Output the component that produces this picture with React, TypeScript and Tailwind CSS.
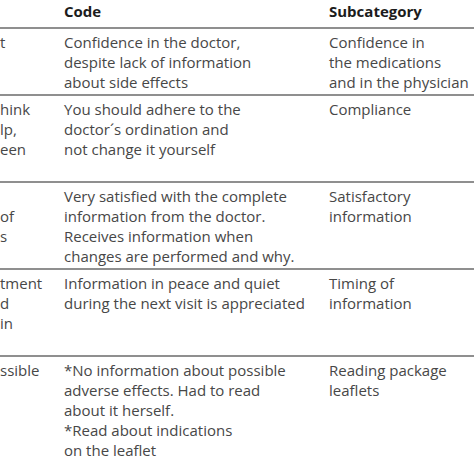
type Row = {
  theme: string[]
  code: string[]
  sub: string[]
}

const rows: Row[] = [
  {
    theme: ["t", "", ""],
    code: ["Confidence in the doctor,", "despite lack of information", "about side effects"],
    sub: ["Confidence in", "the medications", "and in the physician"],
  },
  {
    theme: ["hink", "lp,", "een", ""],
    code: ["You should adhere to the", "doctor´s ordination and", "not change it yourself"],
    sub: ["Compliance"],
  },
  {
    theme: ["", "of", "s", ""],
    code: [
      "Very satisfied with the complete",
      "information from the doctor.",
      "Receives information when",
      "changes are performed and why.",
    ],
    sub: ["Satisfactory", "information"],
  },
  {
    theme: ["tment", "d", "in", ""],
    code: ["Information in peace and quiet", "during the next visit is appreciated"],
    sub: ["Timing of", "information"],
  },
  {
    theme: ["ssible", "", "", "", ""],
    code: [
      "*No information about possible",
      "adverse effects. Had to read",
      "about it herself.",
      "*Read about indications",
      "on the leaflet",
    ],
    sub: ["Reading package", "leaflets"],
  },
]

function Lines({ items }: { items: string[] }) {
  return (
    <div className="flex flex-col">
      {items.map((line, i) => (
        <div key={i} className="whitespace-nowrap h-[20px]">
          {line || "\u00a0"}
        </div>
      ))}
    </div>
  )
}

export default function App() {
  return (
    <div
      className="w-[474px] h-[474px] overflow-hidden bg-white text-[15px] leading-[20px] text-[#474747]"
      style={{ fontFamily: '"Open Sans", "Noto Sans", sans-serif' }}
    >
      <div className="grid grid-cols-[64px_265px_1fr] h-[27px] content-end items-end pb-[6px] font-bold text-[#1c1c1c]">
        <div />
        <div>Code</div>
        <div>Subcategory</div>
      </div>
      {rows.map((row, i) => (
        <div
          key={i}
          className="grid grid-cols-[64px_265px_1fr] border-t-2 border-[#8f8f8f] pt-[3px] pb-[2px]"
        >
          <Lines items={row.theme} />
          <Lines items={row.code} />
          <Lines items={row.sub} />
        </div>
      ))}
    </div>
  )
}
